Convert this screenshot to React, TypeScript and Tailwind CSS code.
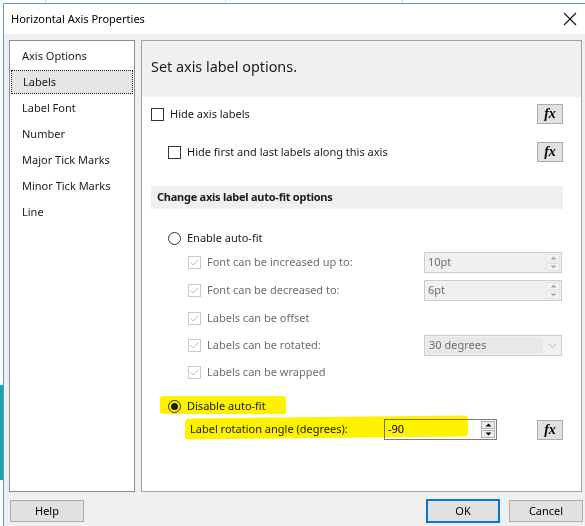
import React from "react";

const font = { fontFamily: '"Noto Sans", "Open Sans", sans-serif' };

function Fx() {
  return (
    <div className="flex h-[20px] w-[26px] items-center justify-center border border-[#adadad] bg-[#e1e1e1]">
      <span
        className="text-[14px] font-bold italic leading-none text-black"
        style={{ fontFamily: '"Liberation Serif", serif' }}
      >
        fx
      </span>
    </div>
  );
}

function CheckBox({ checked, disabled }: { checked?: boolean; disabled?: boolean }) {
  return (
    <div
      className={
        "flex h-[13px] w-[13px] shrink-0 items-center justify-center border bg-white " +
        (disabled ? "border-[#c9c9c9]" : "border-[#333333]")
      }
    >
      {checked && (
        <svg width="11" height="11" viewBox="0 0 11 11">
          <path d="M1.5 5.5 L4 8 L9.5 2.5" fill="none" stroke={disabled ? "#bfbfbf" : "#000"} strokeWidth="1" />
        </svg>
      )}
    </div>
  );
}

function Radio({ checked }: { checked?: boolean }) {
  return (
    <div className="flex h-[13px] w-[13px] shrink-0 items-center justify-center rounded-full border border-[#333333] bg-white">
      {checked && <div className="h-[7px] w-[7px] rounded-full bg-[#1a1a1a]" />}
    </div>
  );
}

function Spin({ value, disabled, width }: { value: string; disabled?: boolean; width: string }) {
  return (
    <div
      className={
        "flex h-[21px] items-stretch border " +
        width +
        (disabled ? " border-[#cccccc] bg-[#f0f0f0] text-[#6d6d6d]" : " border-[#7a7a7a] bg-white text-black")
      }
    >
      <div className="flex flex-1 items-center pl-[3px] text-[11px]">{value}</div>
      <div className="flex w-[15px] flex-col justify-center gap-[1px] py-[1px] pr-[1px]">
        {[0, 1].map((i) => (
          <div
            key={i}
            className={
              "flex h-[8px] items-center justify-center border " +
              (disabled ? "border-[#e3e3e3] bg-[#f4f4f4]" : "border-[#adadad] bg-[#efefef]")
            }
          >
            <svg width="7" height="4" viewBox="0 0 7 4">
              <path
                d={i === 0 ? "M0.5 3.5 L3.5 0.5 L6.5 3.5Z" : "M0.5 0.5 L3.5 3.5 L6.5 0.5Z"}
                fill={disabled ? "#a8a8a8" : "#000"}
              />
            </svg>
          </div>
        ))}
      </div>
    </div>
  );
}

function Combo() {
  return (
    <div className="flex h-[21px] w-[138px] items-center border border-[#cccccc] bg-[#f0f0f0] text-[11px] text-[#6d6d6d]">
      <div className="ml-[1px] flex h-[17px] flex-1 items-center bg-[#e8e8e8] pl-[3px]">30 degrees</div>
      <div className="flex w-[18px] items-center justify-center">
        <svg width="9" height="5" viewBox="0 0 9 5">
          <path d="M0.5 0.5 L4.5 4.5 L8.5 0.5" fill="none" stroke="#b5b5b5" strokeWidth="1" />
        </svg>
      </div>
    </div>
  );
}

function AutoRow({ label, right, mt }: { label: string; right?: React.ReactNode; mt: string }) {
  return (
    <div className={"flex h-[21px] items-center " + mt}>
      <div className="ml-[37px] flex w-[236px] items-center gap-[6px] text-[#6d6d6d]">
        <CheckBox checked disabled />
        <span>{label}</span>
      </div>
      {right}
    </div>
  );
}

export default function App() {
  const items = ["Axis Options", "Labels", "Label Font", "Number", "Major Tick Marks", "Minor Tick Marks", "Line"];
  return (
    <div className="relative h-[526px] w-[585px] overflow-hidden bg-white text-[11px] text-[#1a1a1a]" style={font}>
      {/* background app sliver */}
      <div className="absolute left-[45px] top-0 h-[3px] w-px bg-[#d8d8d8]" />
      <div className="absolute left-[225px] top-0 h-[3px] w-px bg-[#d8d8d8]" />
      <div className="absolute left-[402px] top-0 h-[3px] w-px bg-[#d8d8d8]" />
      <div className="absolute left-0 top-[385px] h-[95px] w-[3px] bg-[#17a7a9]" />

      <div className="absolute left-[3px] top-[3px] flex h-[523px] w-[582px] flex-col border-l border-t border-[#5b9bd5]">
        {/* title bar */}
        <div className="flex h-[30px] shrink-0 items-center justify-between bg-white pl-[7px] pr-[8px]">
          <span className="text-[11px] text-black">Horizontal Axis Properties</span>
          <svg width="14" height="14" viewBox="0 0 14 14">
            <path d="M1 1 L13 13 M13 1 L1 13" stroke="#111" strokeWidth="1.1" />
          </svg>
        </div>

        {/* body */}
        <div className="flex flex-1 flex-col bg-[#f0f0f0] pl-[5px] pt-[6px]">
          <div className="flex h-[452px] gap-[6px]">
            <div className="flex w-[126px] flex-col border border-[#8c8c8c] bg-white pt-[2px]">
              {items.map((it) => (
                <div key={it} className="flex h-[26px] items-center">
                  {it === "Labels" ? (
                    <div className="mx-[1px] flex h-[24px] flex-1 items-center border border-dotted border-[#222] bg-[#e5e5e5] pl-[11px]">
                      {it}
                    </div>
                  ) : (
                    <div className="pl-[12px]">{it}</div>
                  )}
                </div>
              ))}
            </div>

            <div className="relative flex w-[441px] flex-col border border-[#a0a0a0] bg-white">
              <div className="flex h-[56px] items-start bg-[#f0f0f0] pl-[9px] pt-[15px] text-[14.4px] text-[#1a1a1a]">
                Set axis label options.
              </div>

              <div className="flex flex-col pl-[9px] pr-[18px]">
                <div className="mt-[7px] flex h-[20px] items-center justify-between">
                  <div className="flex items-center gap-[6px]">
                    <CheckBox />
                    <span>Hide axis labels</span>
                  </div>
                  <Fx />
                </div>
                <div className="mt-[18px] flex h-[20px] items-center justify-between">
                  <div className="ml-[17px] flex items-center gap-[6px]">
                    <CheckBox />
                    <span>Hide first and last labels along this axis</span>
                  </div>
                  <Fx />
                </div>

                <div className="mt-[24px] flex h-[23px] items-center bg-[#f0f0f0] pl-[6px] font-bold tracking-[-0.25px]">
                  Change axis label auto-fit options
                </div>

                <div className="mt-[19px] flex h-[20px] items-center gap-[6px] pl-[17px]">
                  <Radio />
                  <span>Enable auto-fit</span>
                </div>

                <AutoRow mt="mt-[4px]" label="Font can be increased up to:" right={<Spin value="10pt" disabled width="w-[138px]" />} />
                <AutoRow mt="mt-[7px]" label="Font can be decreased to:" right={<Spin value="6pt" disabled width="w-[138px]" />} />
                <AutoRow mt="mt-[7px]" label="Labels can be offset" />
                <AutoRow mt="mt-[6px]" label="Labels can be rotated:" right={<Combo />} />
                <AutoRow mt="mt-[6px]" label="Labels can be wrapped" />

                <div className="mt-[13px] flex h-[20px] items-center gap-[6px] pl-[17px]">
                  <Radio checked />
                  <span>Disable auto-fit</span>
                </div>

                <div className="mt-[3px] flex h-[21px] items-center">
                  <span className="ml-[39px] w-[194px]">Label rotation angle (degrees):</span>
                  <Spin value="-90" width="w-[113px]" />
                  <div className="ml-auto">
                    <Fx />
                  </div>
                </div>
              </div>

              {/* yellow marker annotation */}
              <div className="pointer-events-none absolute left-[18px] top-[355px] h-[18px] w-[126px] rounded-[3px] bg-[#fff200] mix-blend-multiply" />
              <div className="pointer-events-none absolute left-[43px] top-[376px] h-[21px] w-[283px] -skew-y-[0.6deg] rounded-[4px] bg-[#fff200] mix-blend-multiply" />
            </div>
          </div>

          <div className="flex items-center pt-[7px]">
            <button className="ml-[1px] h-[22px] w-[74px] border border-[#adadad] bg-[#e1e1e1] text-[11px] text-black">
              Help
            </button>
            <button className="ml-auto h-[24px] w-[74px] border-2 border-[#0078d7] bg-[#e1e1e1] text-[11px] text-black">
              OK
            </button>
            <button className="ml-[9px] mr-[2px] h-[22px] w-[74px] border border-[#adadad] bg-[#e1e1e1] text-[11px] text-black">
              Cancel
            </button>
          </div>
        </div>
      </div>
    </div>
  );
}
